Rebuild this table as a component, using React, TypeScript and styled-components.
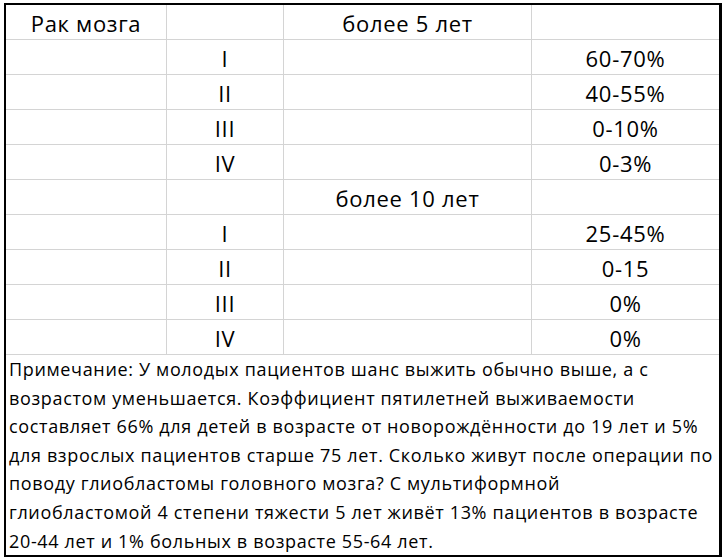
import * as React from 'react';
import styled, {createGlobalStyle} from 'styled-components';

const GlobalStyle = createGlobalStyle`
  html, body {
    margin: 0;
    padding: 0;
    background: #ffffff;
  }
  body {
    font-family: "Open Sans", "Noto Sans", sans-serif;
    color: #000000;
  }
`;

const Page = styled.div`
  width: 723px;
  height: 559px;
  box-sizing: border-box;
  padding: 3px 1px 0 4px;
  overflow: hidden;
`;

const Frame = styled.div`
  box-sizing: border-box;
  height: 554px;
  border: 2px solid #000000;
  border-right-width: 3px;
  display: flex;
  flex-direction: column;
`;

const Sheet = styled.div`
  display: grid;
  grid-template-columns: 161px 117px 248px 1fr;
  grid-auto-rows: 35px;
`;

const Cell = styled.div<{$last?: boolean}>`
  box-sizing: border-box;
  border-bottom: 1px solid #d4d4d4;
  border-right: ${p => (p.$last ? 'none' : '1px solid #d4d4d4')};
  display: flex;
  align-items: flex-end;
  justify-content: center;
  padding-bottom: 5px;
  font-size: 22px;
  line-height: 22px;
  letter-spacing: 0.7px;
  white-space: nowrap;
`;

const Note = styled.div`
  flex: 1;
  padding: 0 3px;
  font-size: 18px;
  line-height: 28.6px;
  letter-spacing: 0.65px;
`;

const NoteLine = styled.div`
  white-space: nowrap;
`;

type Row = [string, string, string, string];

const rows: Row[] = [
  ['Рак мозга', '', 'более 5 лет', ''],
  ['', 'I', '', '60-70%'],
  ['', 'II', '', '40-55%'],
  ['', 'III', '', '0-10%'],
  ['', 'IV', '', '0-3%'],
  ['', '', 'более 10 лет', ''],
  ['', 'I', '', '25-45%'],
  ['', 'II', '', '0-15'],
  ['', 'III', '', '0%'],
  ['', 'IV', '', '0%'],
];

const noteLines = [
  'Примечание: У молодых пациентов шанс выжить обычно выше, а с',
  'возрастом уменьшается. Коэффициент пятилетней выживаемости',
  'составляет 66% для детей в возрасте от новорождённости до 19 лет и 5%',
  'для взрослых пациентов старше 75 лет. Сколько живут после операции по',
  'поводу глиобластомы головного мозга? С мультиформной',
  'глиобластомой 4 степени тяжести 5 лет живёт 13% пациентов в возрасте',
  '20-44 лет и 1% больных в возрасте 55-64 лет.',
];

const App = () => (
  <>
    <GlobalStyle/>
    <Page>
      <Frame>
        <Sheet>
          {rows.map((row, r) =>
            row.map((text, c) => (
              <Cell key={`${r}-${c}`} $last={c === 3}>{text}</Cell>
            ))
          )}
        </Sheet>
        <Note>
          {noteLines.map((line, i) => <NoteLine key={i}>{line}</NoteLine>)}
        </Note>
      </Frame>
    </Page>
  </>
);

export default App;
